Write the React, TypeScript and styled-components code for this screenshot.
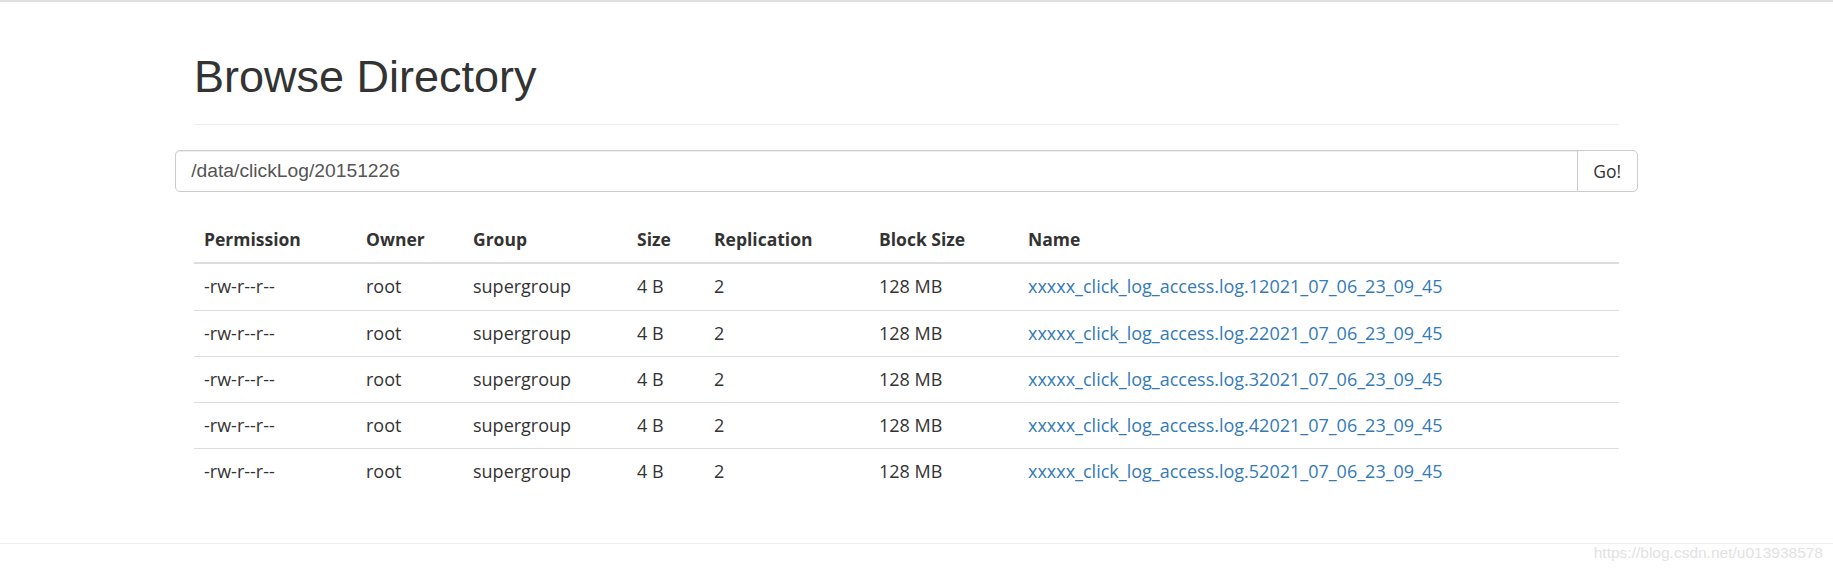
import React from 'react';
import styled, { createGlobalStyle } from 'styled-components';

type TFile = {
    permission: string;
    owner: string;
    group: string;
    size: string;
    replication: number;
    blockSize: string;
    name: string;
};

const files: TFile[] = [1, 2, 3, 4, 5].map((n) => ({
    permission: '-rw-r--r--',
    owner: 'root',
    group: 'supergroup',
    size: '4 B',
    replication: 2,
    blockSize: '128 MB',
    name: `xxxxx_click_log_access.log.${n}2021_07_06_23_09_45`,
}));

const columns = [
    { title: 'Permission', width: 162 },
    { title: 'Owner', width: 107 },
    { title: 'Group', width: 164 },
    { title: 'Size', width: 77 },
    { title: 'Replication', width: 165 },
    { title: 'Block Size', width: 149 },
    { title: 'Name', width: 601 },
];

export default function App() {
    return (
        <>
            <GlobalStyle />
            <Page>
                <Main>
                    <Container>
                        <PageHeader>
                            <Title>Browse Directory</Title>
                        </PageHeader>

                        <InputGroup onSubmit={(e) => e.preventDefault()}>
                            <PathInput type="text" defaultValue="/data/clickLog/20151226" />
                            <GoButton type="submit">Go!</GoButton>
                        </InputGroup>

                        <Table>
                            <colgroup>
                                {columns.map((c) => (
                                    <Col key={c.title} $width={c.width} />
                                ))}
                            </colgroup>
                            <thead>
                                <tr>
                                    {columns.map((c) => (
                                        <Th key={c.title}>{c.title}</Th>
                                    ))}
                                </tr>
                            </thead>
                            <tbody>
                                {files.map((f) => (
                                    <tr key={f.name}>
                                        <Td>{f.permission}</Td>
                                        <Td>{f.owner}</Td>
                                        <Td>{f.group}</Td>
                                        <Td>{f.size}</Td>
                                        <Td>{f.replication}</Td>
                                        <Td>{f.blockSize}</Td>
                                        <Td>
                                            <FileLink href="#">{f.name}</FileLink>
                                        </Td>
                                    </tr>
                                ))}
                            </tbody>
                        </Table>
                    </Container>
                </Main>
                <FooterRule />
                <Watermark>https://blog.csdn.net/u013938578</Watermark>
            </Page>
        </>
    );
}

const GlobalStyle = createGlobalStyle`
    html, body {
        margin: 0;
        padding: 0;
        background: #fff;
    }
    body {
        font-family: "Open Sans", "Noto Sans", sans-serif;
        color: #333;
    }
`;

const Page = styled.div`
    position: relative;
    min-height: 570px;
    border-top: 2px solid #e0e0e3;
    box-sizing: border-box;
    overflow: hidden;
`;

// leaves room where the scrollbar sat, so the container is centred like the original
const Main = styled.div`
    padding-right: 20px;
`;

const Container = styled.div`
    width: 1425px;
    margin: 0 auto;
`;

const PageHeader = styled.div`
    margin: 49.7px 0 25px;
    padding-bottom: 11.25px;
    border-bottom: 1px solid #eee;
`;

const Title = styled.h1`
    margin: 0 0 11.5px;
    font-family: "Liberation Sans", Arial, sans-serif;
    font-size: 45px;
    font-weight: 400;
    line-height: 49.5px;
    color: #333;
`;

const InputGroup = styled.form`
    display: flex;
    height: 42.5px;
    margin: 0 -18.75px;
`;

const PathInput = styled.input`
    flex: 1;
    min-width: 0;
    height: 42.5px;
    box-sizing: border-box;
    padding: 7.5px 15px;
    font-family: "Liberation Sans", Arial, sans-serif;
    font-size: 19.25px;
    color: #555;
    background: #fff;
    border: 1px solid #ccc;
    border-radius: 5px 0 0 5px;
    box-shadow: inset 0 1px 1px rgba(0, 0, 0, 0.075);
    outline: none;
`;

const GoButton = styled.button`
    width: 61px;
    height: 42.5px;
    margin-left: -1px;
    padding: 0;
    font-family: "Open Sans", "Noto Sans", sans-serif;
    font-size: 17.5px;
    color: #333;
    background: #fff;
    border: 1px solid #ccc;
    border-radius: 0 5px 5px 0;
    cursor: pointer;
`;

const Table = styled.table`
    width: 100%;
    margin-top: 25px;
    border-collapse: collapse;
    border-spacing: 0;
    table-layout: fixed;
    font-size: 17.5px;
`;

const Col = styled.col<{ $width: number }>`
    width: ${(p) => p.$width}px;
`;

const Th = styled.th`
    padding: 10px;
    font-weight: 700;
    line-height: 25px;
    text-align: left;
    vertical-align: bottom;
    color: #333;
    border-bottom: 2px solid #ddd;
    white-space: nowrap;
`;

const Td = styled.td`
    padding: 10px;
    font-size: 18px;
    line-height: 25.25px;
    vertical-align: top;
    color: #333;
    border-top: 1px solid #ddd;
    white-space: nowrap;
`;

const FileLink = styled.a`
    color: #337ab7;
    text-decoration: none;
`;

const FooterRule = styled.hr`
    margin: 48.75px 0 0;
    border: 0;
    border-top: 1px solid #eee;
`;

const Watermark = styled.span`
    position: absolute;
    top: 541px;
    right: 10px;
    font-family: "Liberation Sans", Arial, sans-serif;
    font-size: 15.5px;
    line-height: 20px;
    color: #e2e2e2;
    pointer-events: none;
`;
